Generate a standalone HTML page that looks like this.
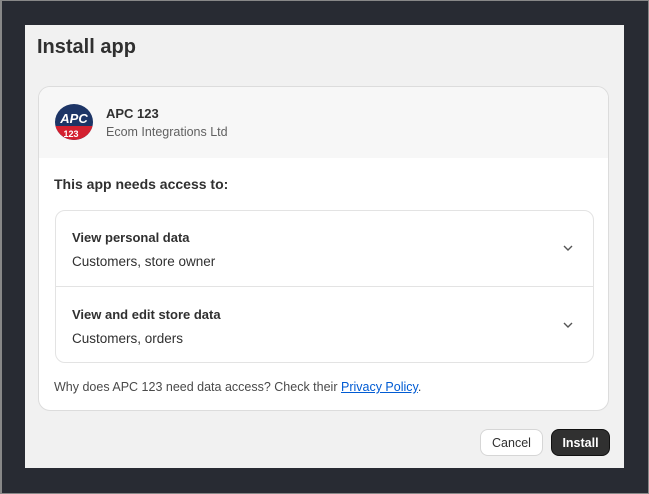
<!DOCTYPE html>
<html><head><style>
*{box-sizing:border-box;margin:0;padding:0}
body{width:649px;height:494px;background:#282b33;font-family:"Liberation Sans",sans-serif;position:relative;overflow:hidden;border:1px solid #888;border-left-width:2px}
.dlg{position:absolute;left:23px;top:24px;width:599px;height:443px;background:#f1f1f1}
h1{position:absolute;left:12px;top:11px;font-size:20px;font-weight:bold;color:#303030}
.card{position:absolute;left:13px;top:61px;width:571px;height:325px;background:#fff;border:1px solid #dcdcdc;border-radius:12px;overflow:hidden}
.hd{height:71px;background:#f7f7f7;position:relative}
.t1{position:absolute;left:67px;top:19px;font-size:13px;font-weight:bold;color:#303030}
.t2{position:absolute;left:67px;top:38px;font-size:12.5px;color:#616161}
.need{position:absolute;left:15px;top:89px;font-size:14px;font-weight:bold;color:#303030}
.box{position:absolute;left:16px;top:123px;width:539px;height:153px;border:1px solid #e3e3e3;border-radius:10px}
.row{position:absolute;left:0;width:100%;height:76px}
.row b{position:absolute;left:16px;top:19px;font-size:13px;color:#303030}
.row span{position:absolute;left:16px;top:43px;font-size:13.5px;color:#303030}
.row svg{position:absolute;right:19px;top:33px}
.ft{position:absolute;left:15px;top:293px;font-size:12.5px;color:#4a4a4a}
.ft a{color:#005bd3;text-decoration:underline}
.btn{position:absolute;top:404px;height:27px;border-radius:8px;font-size:12.5px;font-weight:bold;display:flex;align-items:center;justify-content:center}
</style></head><body>
<div class="dlg">
<h1>Install app</h1>
<div class="card">
<div class="hd">
<svg style="position:absolute;left:15px;top:15px" width="40" height="40" viewBox="0 0 40 40"><ellipse cx="20" cy="20" rx="19" ry="18" fill="#1d3566"/><path d="M1.5 24 H38.5 A19 18 0 0 1 1.5 24Z" fill="#d3202f"/><text x="20" y="21" font-family="Liberation Sans" font-size="13" font-weight="bold" fill="#fff" text-anchor="middle" font-style="italic">APC</text><text x="17" y="35" font-family="Liberation Sans" font-size="9" font-weight="bold" fill="#fff" text-anchor="middle">123</text></svg>
<div class="t1">APC 123</div><div class="t2">Ecom Integrations Ltd</div>
</div>
<div class="need">This app needs access to:</div>
<div class="box">
<div class="row" style="top:0;border-bottom:1px solid #e3e3e3"><b>View personal data</b><span>Customers, store owner</span><svg width="12" height="8" viewBox="0 0 12 8"><path d="M2 2l4 4 4-4" fill="none" stroke="#555" stroke-width="1.4"/></svg></div>
<div class="row" style="top:77px"><b>View and edit store data</b><span>Customers, orders</span><svg width="12" height="8" viewBox="0 0 12 8"><path d="M2 2l4 4 4-4" fill="none" stroke="#555" stroke-width="1.4"/></svg></div>
</div>
<div class="ft">Why does APC 123 need data access? Check their <a>Privacy Policy</a>.</div>
</div>
<div class="btn" style="left:455px;width:63px;background:#fff;border:1px solid #d6d6d6;color:#303030;font-weight:normal">Cancel</div>
<div class="btn" style="left:526px;width:59px;background:#303030;color:#fff;border:1px solid #111">Install</div>
</div>
</body></html>
